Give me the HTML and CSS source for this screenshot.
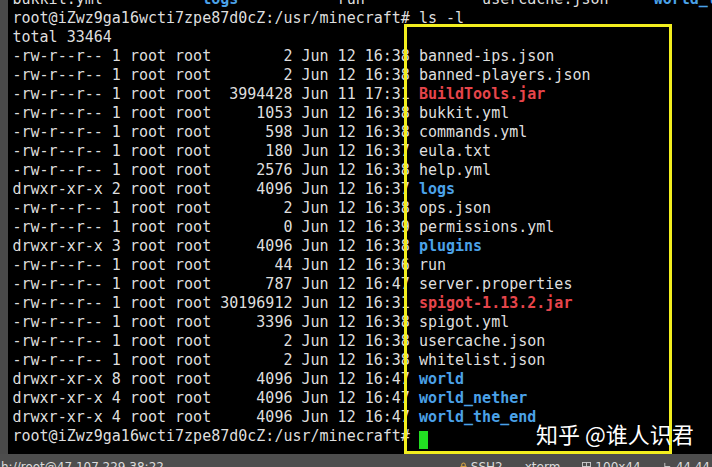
FILE: index.html
```html
<!DOCTYPE html>
<html>
<head>
<meta charset="utf-8">
<link rel="stylesheet" href="styles.css">
</head>
<body>
<div class="window">
  <div class="main">
    <div class="gutter"></div>
    <div class="terminal">
<pre class="screen">bukkit.yml           <b class="dir">logs</b>           run             usercache.json     <b class="dir">world_the_end</b>
root@iZwz9ga16wcti7zpe87d0cZ:/usr/minecraft# ls -l
total 33464
-rw-r--r-- 1 root root        2 Jun 12 16:38 banned-ips.json
-rw-r--r-- 1 root root        2 Jun 12 16:38 banned-players.json
-rw-r--r-- 1 root root  3994428 Jun 11 17:31 <b class="arc">BuildTools.jar</b>
-rw-r--r-- 1 root root     1053 Jun 12 16:38 bukkit.yml
-rw-r--r-- 1 root root      598 Jun 12 16:38 commands.yml
-rw-r--r-- 1 root root      180 Jun 12 16:37 eula.txt
-rw-r--r-- 1 root root     2576 Jun 12 16:38 help.yml
drwxr-xr-x 2 root root     4096 Jun 12 16:37 <b class="dir">logs</b>
-rw-r--r-- 1 root root        2 Jun 12 16:38 ops.json
-rw-r--r-- 1 root root        0 Jun 12 16:39 permissions.yml
drwxr-xr-x 3 root root     4096 Jun 12 16:38 <b class="dir">plugins</b>
-rw-r--r-- 1 root root       44 Jun 12 16:36 run
-rw-r--r-- 1 root root      787 Jun 12 16:47 server.properties
-rw-r--r-- 1 root root 30196912 Jun 12 16:31 <b class="arc">spigot-1.13.2.jar</b>
-rw-r--r-- 1 root root     3396 Jun 12 16:38 spigot.yml
-rw-r--r-- 1 root root        2 Jun 12 16:38 usercache.json
-rw-r--r-- 1 root root        2 Jun 12 16:38 whitelist.json
drwxr-xr-x 8 root root     4096 Jun 12 16:47 <b class="dir">world</b>
drwxr-xr-x 4 root root     4096 Jun 12 16:47 <b class="dir">world_nether</b>
drwxr-xr-x 4 root root     4096 Jun 12 16:47 <b class="dir">world_the_end</b>
root@iZwz9ga16wcti7zpe87d0cZ:/usr/minecraft# <span class="cursor"> </span></pre>
      <div class="highlight"></div>
      <div class="watermark">知乎 @谁人识君</div>
    </div>
  </div>
  <div class="status">
    <span class="addr">h://root@47.107.229.38:22</span>
    <div class="info">
      <span class="item"><svg class="ico" viewBox="0 0 8 10" width="7" height="9"><path d="M2 4.5V3a2 2 0 0 1 4 0v1.5" fill="none" stroke="#d9a441" stroke-width="1.2"/><rect x="0.5" y="4.5" width="7" height="5" fill="#d9a441"/></svg>SSH2</span>
      <span class="item">xterm</span>
      <span class="item"><svg class="ico" viewBox="0 0 10 10" width="9" height="9"><rect x="0.5" y="0.5" width="9" height="9" fill="none" stroke="#cfcfcf"/><path d="M5 0.5V9.5M0.5 5H9.5" stroke="#cfcfcf"/></svg>100x44</span>
      <span class="item"><svg class="ico" viewBox="0 0 10 10" width="9" height="9"><path d="M2 1V9M2 5H8" stroke="#cfcfcf"/></svg>44,44</span>
    </div>
  </div>
</div>
</body>
</html>
```

FILE: styles.css
```css
html, body {
  margin: 0;
  padding: 0;
  background: #4b4b4b;
}

.window {
  width: 712px;
  height: 467px;
  display: flex;
  flex-direction: column;
  overflow: hidden;
}

.main {
  display: flex;
  height: 454px;
  flex: none;
}

.gutter {
  width: 8px;
  background: #4a4a4a;
  flex: none;
}

.terminal {
  position: relative;
  flex: 1;
  background: #000;
  overflow: hidden;
}

.screen {
  margin: -10px 0 0 0;
  padding: 0 0 0 4.5px;
  font-family: "DejaVu Sans Mono", monospace;
  font-size: 15px;
  line-height: 19px;
  color: #dedede;
  white-space: pre;
}

.screen b {
  font-weight: bold;
}

.dir {
  color: #4ba2e8;
}

.arc {
  color: #e6454b;
}

.cursor {
  display: inline-block;
  width: 9px;
  height: 18px;
  background: #22dd22;
  vertical-align: -4px;
}

.highlight {
  position: absolute;
  left: 396px;
  top: 24px;
  width: 262px;
  height: 424px;
  border: 3px solid #f2ee1e;
}

.watermark {
  position: absolute;
  left: 528px;
  top: 419px;
  font-family: "Noto Sans CJK SC", sans-serif;
  font-size: 22px;
  line-height: 28px;
  color: #ffffff;
  white-space: nowrap;
}

.status {
  flex: 1;
  background: #4d4d4d;
  display: flex;
  justify-content: space-between;
  font-family: "DejaVu Sans", sans-serif;
  font-size: 12px;
  line-height: 14px;
  color: #dcdcdc;
  padding-top: 6px;
  white-space: nowrap;
}

.addr {
  padding-left: 1px;
}

.info {
  display: flex;
  gap: 22px;
  padding-right: 2px;
}

.item {
  display: flex;
  gap: 4px;
  align-items: flex-start;
}

.ico {
  margin-top: 2px;
}
```
